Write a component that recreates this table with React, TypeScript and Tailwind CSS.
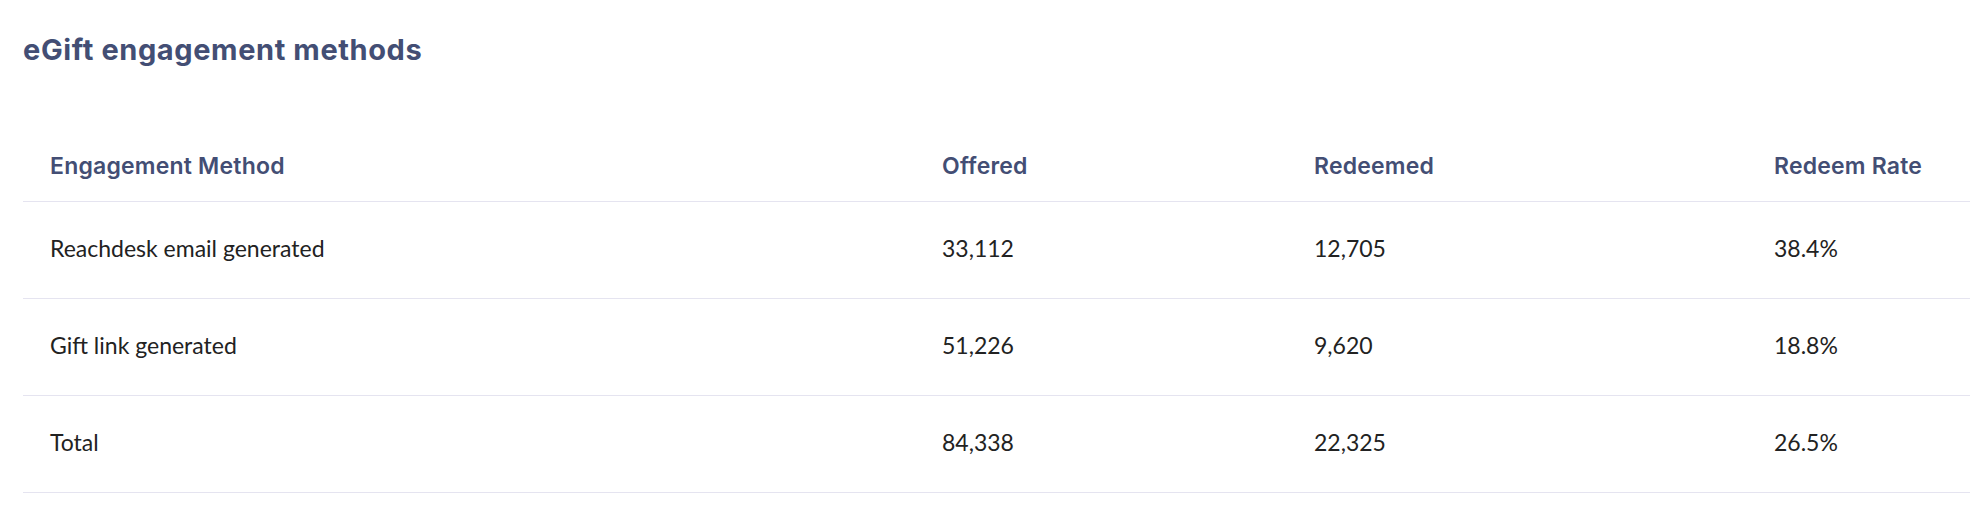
const rows = [
    { method: "Reachdesk email generated", offered: "33,112", redeemed: "12,705", rate: "38.4%" },
    { method: "Gift link generated", offered: "51,226", redeemed: "9,620", rate: "18.8%" },
    { method: "Total", offered: "84,338", redeemed: "22,325", rate: "26.5%" },
];

const App = () => {
    return (
        <div className="min-h-[512px] bg-white pl-[23px] pt-[32px]">
            <h2 className="font-['Inter',sans-serif] text-[29px] leading-[36px] font-bold tracking-[0.6px] text-[#434e74]">
                eGift engagement methods
            </h2>

            <table className="mt-[63px] w-[1947px] table-fixed border-collapse text-left">
                <colgroup>
                    <col className="w-[892px]" />
                    <col className="w-[372px]" />
                    <col className="w-[460px]" />
                    <col />
                </colgroup>
                <thead>
                    <tr className="h-[70px] border-b border-[#e5e4f0]">
                        {["Engagement Method", "Offered", "Redeemed", "Redeem Rate"].map((h) => (
                            <th key={h} className="pl-[27px] align-middle font-['Inter',sans-serif] text-[23px] leading-[28px] font-semibold tracking-[0.2px] text-[#434e74]">
                                {h}
                            </th>
                        ))}
                    </tr>
                </thead>
                <tbody>
                    {rows.map((r) => (
                        <tr key={r.method} className="h-[97px] border-b border-[#e5e4f0] font-['Lato',sans-serif] text-[23px] text-[#222222]">
                            <td className="pl-[27px] pb-[3px]">{r.method}</td>
                            <td className="pl-[27px] pb-[3px]">{r.offered}</td>
                            <td className="pl-[27px] pb-[3px]">{r.redeemed}</td>
                            <td className="pl-[27px] pb-[3px]">{r.rate}</td>
                        </tr>
                    ))}
                </tbody>
            </table>
        </div>
    );
};

export default App;
